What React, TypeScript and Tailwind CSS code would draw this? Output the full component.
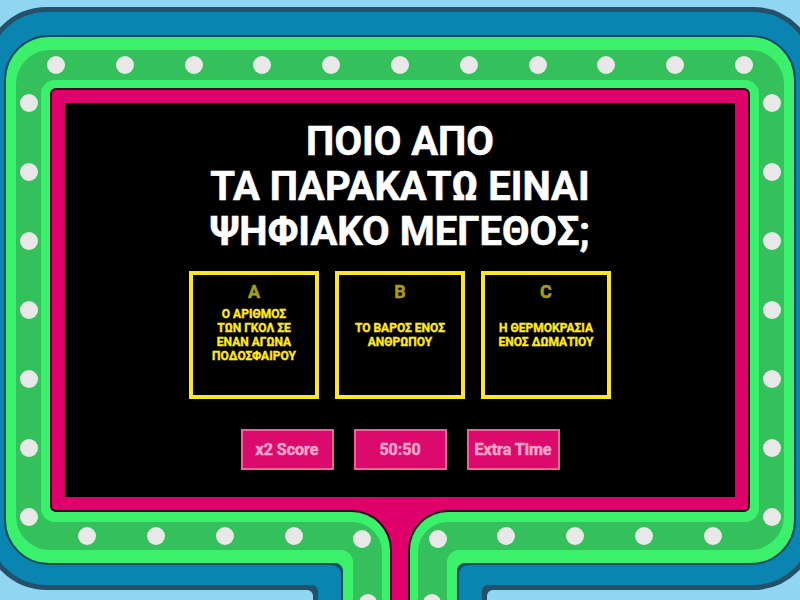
import React from "react";

const Dot = () => <div className="w-[18px] h-[18px] rounded-full bg-[#e8e8e8] shrink-0" />;

function stem(L: number, R: number, T: number, r: number, B = 606) {
  return `M ${L - r} ${T - 1} L ${R + r} ${T - 1} L ${R + r} ${T} A ${r} ${r} 0 0 0 ${R} ${T + r} L ${R} ${B} L ${L} ${B} L ${L} ${T + r} A ${r} ${r} 0 0 0 ${L - r} ${T} Z`;
}

const answers = [
  { letter: "A", lines: ["Ο ΑΡΙΘΜΟΣ", "ΤΩΝ ΓΚΟΛ ΣΕ", "ΕΝΑΝ ΑΓΩΝΑ", "ΠΟΔΟΣΦΑΙΡΟΥ"] },
  { letter: "B", lines: ["ΤΟ ΒΑΡΟΣ ΕΝΟΣ", "ΑΝΘΡΩΠΟΥ"] },
  { letter: "C", lines: ["Η ΘΕΡΜΟΚΡΑΣΙΑ", "ΕΝΟΣ ΔΩΜΑΤΙΟΥ"] },
];

export default function App() {
  const font = { fontFamily: "Roboto, 'Noto Sans', sans-serif" };
  return (
    <div className="relative w-[800px] h-[600px] overflow-hidden bg-[#8fd6f3]" style={font}>
      {/* outer blue frame */}
      <div className="mt-[7px] ml-[-17px] w-[834px] h-[583px] rounded-[64px] border-[5px] border-[#25506a] bg-[#0a84b0] pt-[23px] px-[16px] pb-[20px]">
        {/* green frame */}
        <div className="h-[530px] rounded-[45px] border-2 border-[#124c60] bg-[#3bf06b] pt-[13px] px-[10px] pb-[13px]">
          {/* medium green band with lights */}
          <div className="h-[500px] rounded-[34px] bg-[#34c05a] grid grid-cols-[25px_1fr_25px] grid-rows-[30px_442px_28px]">
            <div className="col-span-3 flex items-center justify-between pl-[31px] pr-[31px]">
              {Array.from({ length: 11 }).map((_, i) => (
                <Dot key={i} />
              ))}
            </div>
            <div className="flex flex-col items-center gap-[51px] pt-[14px]">
              {Array.from({ length: 7 }).map((_, i) => (
                <Dot key={i} />
              ))}
            </div>
            {/* inner bright green */}
            <div className="rounded-[14px] bg-[#3bf06b] pt-[8px] px-[9px] pb-[10px]">
              {/* magenta frame */}
              <div className="rounded-[6px] border-2 border-[#2a1020] bg-[#df006b] p-[13px]">
                {/* black screen */}
                <div className="h-[394px] bg-black flex flex-col items-center pt-[16px]">
                  <div className="text-[40px] leading-[45px] font-bold text-white text-center [-webkit-text-stroke:0.6px_#ffffff]">
                    <div>ΠΟΙΟ ΑΠΟ</div>
                    <div>ΤΑ ΠΑΡΑΚΑΤΩ ΕΙΝΑΙ</div>
                    <div>ΨΗΦΙΑΚΟ ΜΕΓΕΘΟΣ;</div>
                  </div>
                  <div className="mt-[17px] flex gap-[16px]">
                    {answers.map((a) => (
                      <div
                        key={a.letter}
                        className="w-[130px] h-[128px] border-[4px] border-[#fbe724] flex flex-col items-center"
                      >
                        <div className="mt-[6px] h-[21px] leading-[21px] text-[18px] font-bold text-[#a49d15] [-webkit-text-stroke:0.5px_#a49d15]">
                          {a.letter}
                        </div>
                        <div className="flex-1 flex flex-col items-center justify-center text-[12px] leading-[14px] font-bold text-[#ffe91c] text-center [-webkit-text-stroke:0.4px_#ffe91c]">
                          {a.lines.map((l) => (
                            <div key={l} className="whitespace-nowrap">
                              {l}
                            </div>
                          ))}
                        </div>
                        <div className="h-[27px] shrink-0" />
                      </div>
                    ))}
                  </div>
                  <div className="mt-[30px] flex gap-[20px]">
                    {["x2 Score", "50:50", "Extra Time"].map((b) => (
                      <div
                        key={b}
                        className="w-[93px] h-[41px] border-2 border-[#f0609f] bg-[#dc0a6c] flex items-center justify-center text-[16px] font-bold text-[#f8a6ca] [-webkit-text-stroke:0.5px_#f8a6ca]"
                      >
                        {b}
                      </div>
                    ))}
                  </div>
                </div>
              </div>
            </div>
            <div className="flex flex-col items-center gap-[51px] pt-[14px]">
              {Array.from({ length: 7 }).map((_, i) => (
                <Dot key={i} />
              ))}
            </div>
            <div className="col-span-3 flex items-center justify-between pl-[62px] pr-[62px]">
              <div className="flex gap-[51px]">
                {Array.from({ length: 4 }).map((_, i) => (
                  <Dot key={i} />
                ))}
              </div>
              <div className="flex gap-[51px]">
                {Array.from({ length: 4 }).map((_, i) => (
                  <Dot key={i} />
                ))}
              </div>
            </div>
          </div>
        </div>
      </div>

      {/* stand / stem junction drawing */}
      <svg
        className="absolute left-[290px] top-[495px] pointer-events-none"
        width="220"
        height="105"
        viewBox="290 495 220 105"
      >
        <path d={stem(313, 487, 590, 6)} fill="#25506a" />
        <path d={stem(318, 482, 585, 6)} fill="#0a84b0" />
        <path d={stem(341, 459, 565, 9)} fill="#124c60" />
        <path d={stem(343, 457, 563, 8)} fill="#3bf06b" />
        <path d={stem(353, 447, 550, 12)} fill="#34c05a" />
        <path d={stem(382, 418, 522, 30)} fill="#3bf06b" />
        <path d={stem(390, 410, 512, 38)} fill="#2a1020" />
        <path d={stem(392, 408, 510, 40)} fill="#df006b" />
        <circle cx="362" cy="539" r="9" fill="#e8e8e8" />
        <circle cx="438" cy="539" r="9" fill="#e8e8e8" />
        <circle cx="368" cy="603" r="9" fill="#e8e8e8" />
        <circle cx="432" cy="603" r="9" fill="#e8e8e8" />
      </svg>
    </div>
  );
}
